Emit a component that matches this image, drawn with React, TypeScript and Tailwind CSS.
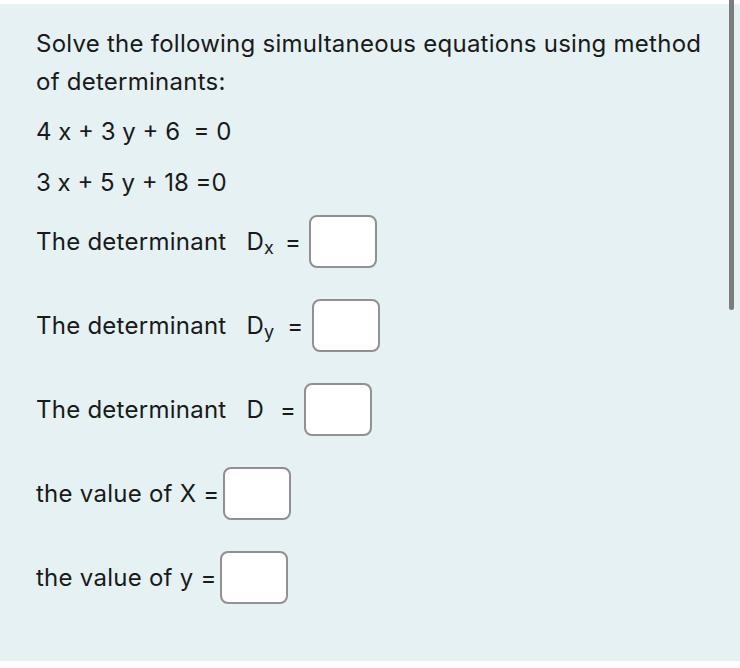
import React from 'react';

const Box = ({ className = '' }: { className?: string }) => (
    <div className={`w-[68px] h-[53px] rounded-[8px] border-2 border-[#909090] bg-white ${className}`} />
);

export default function App() {
    return (
        <div className="relative w-[740px] h-[668px] bg-white overflow-hidden text-[#181a1b] tracking-[0.25px]" style={{ fontFamily: 'Inter, "Noto Sans", sans-serif' }}>
            <div className="mt-[4px] h-[657px] bg-[#e6f1f4] pl-[36px] pt-[21px]">
                {/* question */}
                <p className="text-[24px] leading-[38px] w-[680px]">
                    Solve the following simultaneous equations using method of determinants:
                </p>

                <div className="mt-[13px] flex flex-col gap-[15px] text-[24px] leading-[36px] tracking-normal">
                    <div>4 x + 3 y + 6&nbsp; = 0</div>
                    <div>3 x + 5 y + 18 =0</div>
                </div>

                {/* answers */}
                <div className="mt-[14px] flex flex-col gap-[31px] text-[24px]">
                    <div className="flex items-center h-[53px]">
                        <span>The determinant</span>
                        <span className="ml-[20px]">D<sub className="text-[18px] relative top-[4px] align-baseline">x</sub></span>
                        <span className="ml-[11px]">=</span>
                        <Box className="ml-[8px]" />
                    </div>
                    <div className="flex items-center h-[53px]">
                        <span>The determinant</span>
                        <span className="ml-[20px]">D<sub className="text-[18px] relative top-[4px] align-baseline">y</sub></span>
                        <span className="ml-[13px]">=</span>
                        <Box className="ml-[8px]" />
                    </div>
                    <div className="flex items-center h-[53px]">
                        <span>The determinant</span>
                        <span className="ml-[20px]">D</span>
                        <span className="ml-[16px]">=</span>
                        <Box className="ml-[8px]" />
                    </div>
                    <div className="flex items-center h-[53px]">
                        <span>the value of X =</span>
                        <Box className="ml-[4px]" />
                    </div>
                    <div className="flex items-center h-[53px]">
                        <span>the value of y =</span>
                        <Box className="ml-[3px]" />
                    </div>
                </div>
            </div>

            {/* scrollbar thumb */}
            <div className="absolute left-[729px] top-0 w-[5px] h-[310px] rounded-b-full bg-[#7c7c7c]" />
        </div>
    );
}
